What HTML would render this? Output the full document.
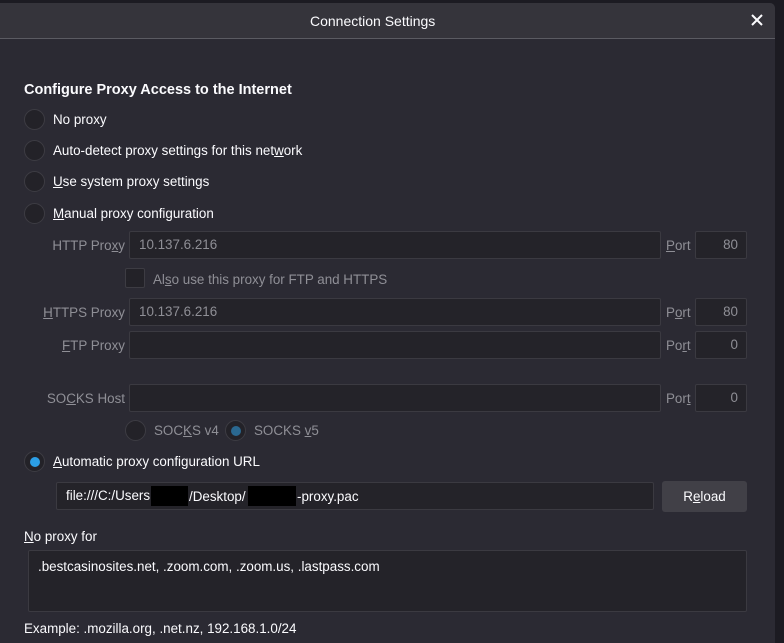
<!DOCTYPE html>
<html><head><meta charset="utf-8"><style>
*{margin:0;padding:0;box-sizing:border-box}
body{width:784px;height:638px;background:#1c1b22;font-family:"Liberation Sans",sans-serif;font-size:13.4px;color:#fbfbfe;position:relative;overflow:hidden}
.dlg{position:absolute;left:0;top:3px;width:775px;height:640px;background:#2b2a33;border-radius:0 5px 0 0}
.hdr{position:absolute;left:0;top:3px;width:775px;height:36px;background:#35343b;border-bottom:1px solid #5b5b62;border-radius:0 5px 0 0}
.a{position:absolute;white-space:nowrap}
.r{position:absolute;width:21px;height:21px;border-radius:50%;background:#232228;border:1px solid #3d3c43}
.r.on::after{content:"";position:absolute;left:4.5px;top:4.5px;width:10px;height:10px;border-radius:50%;background:#2c9fe6}
.in{position:absolute;height:28px;background:#242329;border:1px solid #3b3a41;border-radius:2px;color:#8f8f96;padding-left:9px;line-height:26px}
.d{color:#8f8f96}
u{text-decoration:underline}
</style></head><body>
<div class="dlg"></div>
<div class="hdr"></div>
<div class="a" style="left:310px;top:13px;font-size:14px">Connection Settings</div>
<svg class="a" style="left:751px;top:14px" width="12" height="12" viewBox="0 0 12 12"><path d="M1 1L11 11M11 1L1 11" stroke="#fbfbfe" stroke-width="2"/></svg>
<div class="a" style="left:24px;top:82px;font-size:14.5px;font-weight:bold">Configure Proxy Access to the Internet</div>

<div class="r" style="left:24px;top:109px"></div><div class="a" style="left:53px;top:112px">No proxy</div>
<div class="r" style="left:24px;top:140px"></div><div class="a" style="left:53px;top:143px">Auto-detect proxy settings for this net<u>w</u>ork</div>
<div class="r" style="left:24px;top:171px"></div><div class="a" style="left:53px;top:174px"><u>U</u>se system proxy settings</div>
<div class="r" style="left:24px;top:203px"></div><div class="a" style="left:53px;top:206px"><u>M</u>anual proxy configuration</div>

<div class="a d" style="right:659px;top:238px">HTTP Pro<u>x</u>y</div>
<div class="in" style="left:129px;top:231px;width:532px">10.137.6.216</div>
<div class="a d" style="left:666px;top:238px"><u>P</u>ort</div>
<div class="in" style="left:695px;top:231px;width:52px;text-align:right;padding-right:8px">80</div>

<div class="a" style="left:125px;top:268px;width:20px;height:20px;background:#232228;border:1px solid #3d3c43;border-radius:2px"></div>
<div class="a d" style="left:153px;top:272px">Al<u>s</u>o use this proxy for FTP and HTTPS</div>

<div class="a d" style="right:659px;top:305px"><u>H</u>TTPS Proxy</div>
<div class="in" style="left:129px;top:298px;width:532px">10.137.6.216</div>
<div class="a d" style="left:666px;top:305px">P<u>o</u>rt</div>
<div class="in" style="left:695px;top:298px;width:52px;text-align:right;padding-right:8px">80</div>

<div class="a d" style="right:659px;top:338px"><u>F</u>TP Proxy</div>
<div class="in" style="left:129px;top:331px;width:532px"></div>
<div class="a d" style="left:666px;top:338px">Po<u>r</u>t</div>
<div class="in" style="left:695px;top:331px;width:52px;text-align:right;padding-right:8px">0</div>

<div class="a d" style="right:659px;top:391px">SO<u>C</u>KS Host</div>
<div class="in" style="left:129px;top:384px;width:532px"></div>
<div class="a d" style="left:666px;top:391px">Por<u>t</u></div>
<div class="in" style="left:695px;top:384px;width:52px;text-align:right;padding-right:8px">0</div>

<div class="r" style="left:125px;top:420px"></div><div class="a d" style="left:154px;top:423px">SOC<u>K</u>S v4</div>
<div class="r" style="left:225px;top:420px"><div style="position:absolute;left:4.5px;top:4.5px;width:10px;height:10px;border-radius:50%;background:#2a6890"></div></div><div class="a d" style="left:254px;top:423px">SOCKS <u>v</u>5</div>

<div class="r on" style="left:24px;top:451px"></div><div class="a" style="left:53px;top:454px"><u>A</u>utomatic proxy configuration URL</div>
<div class="in" style="left:56px;top:482px;width:598px;color:#fbfbfe">file:///C:/Users,</div>
<div class="a" style="left:151px;top:486px;width:37px;height:20px;background:#000"></div>
<div class="a" style="left:189px;top:489px">/Desktop/</div>
<div class="a" style="left:248px;top:486px;width:48px;height:20px;background:#000"></div>
<div class="a" style="left:297px;top:489px">-proxy.pac</div>
<div class="a" style="left:662px;top:481px;width:85px;height:31px;background:#414047;border-radius:3px;text-align:center;line-height:31px">R<u>e</u>load</div>

<div class="a" style="left:24px;top:529px"><u>N</u>o proxy for</div>
<div class="a" style="left:28px;top:550px;width:719px;height:62px;background:#242329;border:1px solid #3b3a41;border-radius:2px"></div>
<div class="a" style="left:38px;top:559px">.bestcasinosites.net, .zoom.com, .zoom.us, .lastpass.com</div>
<div class="a" style="left:24px;top:621px">Example: .mozilla.org, .net.nz, 192.168.1.0/24</div>
</body></html>
